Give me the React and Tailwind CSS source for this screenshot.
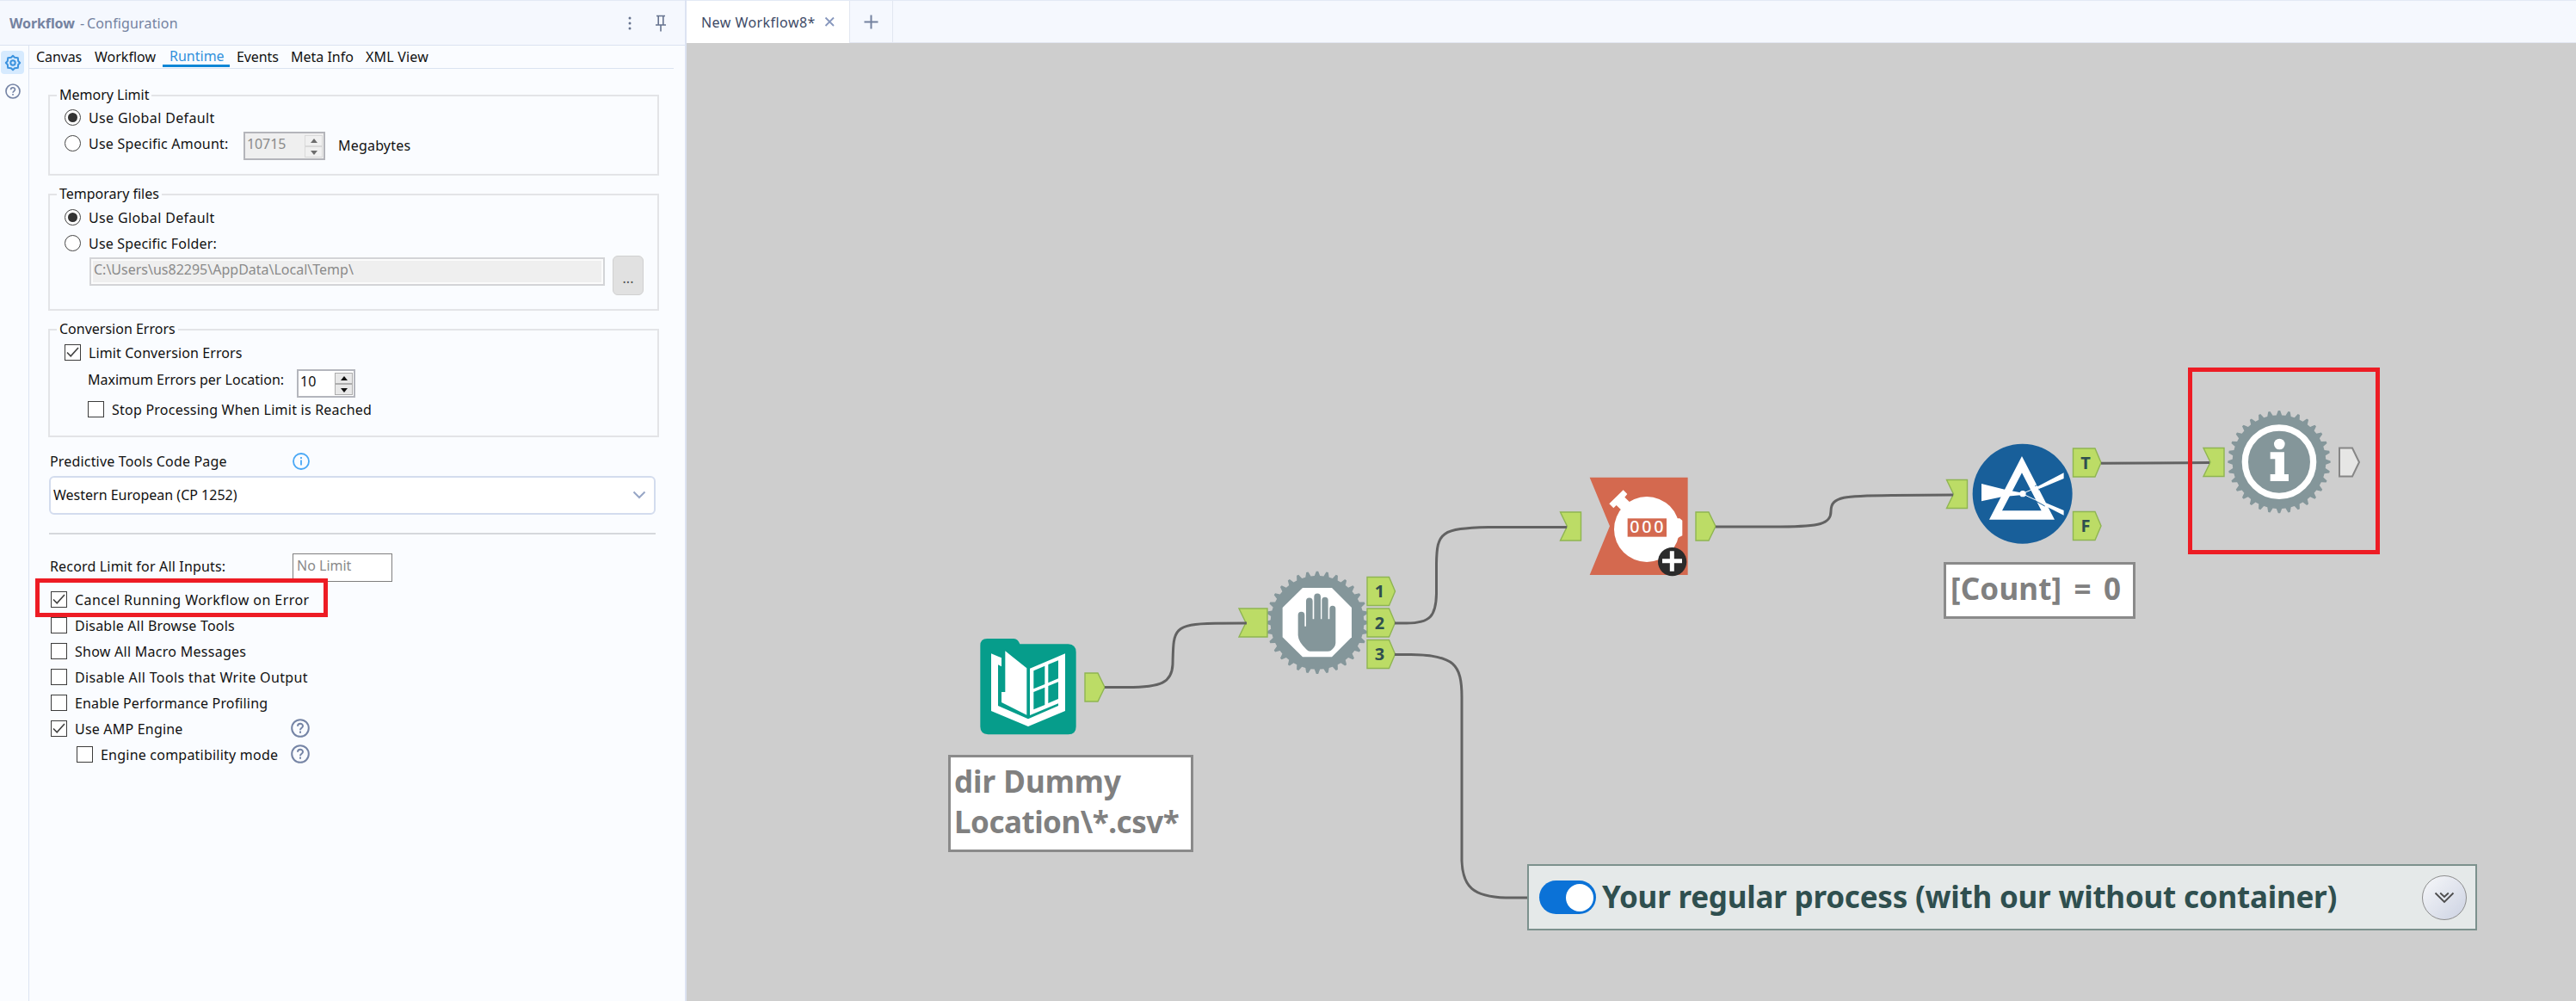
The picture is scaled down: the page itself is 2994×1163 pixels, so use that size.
import React from 'react'
import { clsx } from 'clsx'

const tabs = [
  { name: 'Canvas', cls: 'w-[68px] tracking-[-0.1px]' },
  { name: 'Workflow', cls: 'w-[87px]' },
  { name: 'Runtime', cls: 'w-[78px]' },
  { name: 'Events', cls: 'w-[63px] tracking-[-0.1px]' },
  { name: 'Meta Info', cls: 'w-[87px]' },
  { name: 'XML View', cls: 'w-[90px] tracking-[0.2px]' },
]

// 32 teeth, narrow tips
function gearPoints(cx, cy, outer, inner, teeth) {
  const pts = []
  for (let i = 0; i < teeth; i++) {
    const mid = (i / teeth) * Math.PI * 2 - Math.PI / 2
    const step = (Math.PI * 2) / teeth
    const ring = [[-0.3, inner], [-0.1, outer], [0.1, outer], [0.3, inner]]
    ring.forEach(([off, r]) => {
      const a = mid + off * step
      pts.push(`${(cx + r * Math.cos(a)).toFixed(2)},${(cy + r * Math.sin(a)).toFixed(2)}`)
    })
  }
  return pts.join(' ')
}

function SettingsIcon() {
  return (
    <svg width="20" height="20" viewBox="0 0 20 20" fill="none" stroke="#3b92de" strokeWidth="2" strokeLinejoin="round">
      <path d="M10 1.8 L12 3.8 L15.8 4.2 L16.2 8 L18.2 10 L16.2 12 L15.8 15.8 L12 16.2 L10 18.2 L8 16.2 L4.2 15.8 L3.8 12 L1.8 10 L3.8 8 L4.2 4.2 L8 3.8 Z" />
      <circle cx="10" cy="10" r="2.7" />
    </svg>
  )
}

function HelpIcon({ size = 22 }) {
  return (
    <svg width={size} height={size} viewBox="0 0 22 22" fill="none" stroke="#7584a5" strokeWidth="2" className="shrink-0">
      <circle cx="11" cy="11" r="9.8" />
      <path d="M8 8.8 C8 4.9 14 4.9 14 8.6 C14 10.8 11 10.8 11 13.2" />
      <path d="M11 14.6 V16.8" />
    </svg>
  )
}

function InfoIcon() {
  return (
    <svg width="20" height="20" viewBox="0 0 20 20" fill="none" stroke="#4aa8f5" strokeWidth="1.8" className="shrink-0">
      <circle cx="10" cy="10" r="9" />
      <path d="M10 8.5 V14.5 M10 5 V7" />
    </svg>
  )
}

function Radio({ checked, label, className, children }) {
  return (
    <div className="flex h-[30px] items-center gap-[9px] pl-[17px]">
      <span className="flex size-[19px] shrink-0 items-center justify-center rounded-full border-[1.5px] border-[#444] bg-white">
        {checked && <span className="size-[11px] rounded-full bg-[#333]" />}
      </span>
      <span className={clsx('shrink-0 pt-px', className)}>{label}</span>
      {children}
    </div>
  )
}

function Checkbox({ checked, label, className, children }) {
  return (
    <div className="flex h-[30px] items-center gap-[9px]">
      <span className="flex size-[19px] shrink-0 items-center justify-center border-[1.5px] border-[#3c3c3c] bg-white">
        {checked && (
          <svg width="17" height="17" viewBox="0 0 17 17" fill="none" stroke="#444" strokeWidth="1.7">
            <path d="M2 8.5 L6.2 12.8 L15 3" />
          </svg>
        )}
      </span>
      <span className={clsx('shrink-0 pt-px', className)}>{label}</span>
      {children}
    </div>
  )
}

function Spinner({ value, disabled, className }) {
  return (
    <div
      className={clsx(
        'flex h-[33px] shrink-0 items-center justify-between border-2 pr-[1px] pl-[2px]',
        disabled ? 'border-[#b4b5ba] bg-[#efefef] text-[#8a8a8a]' : 'border-[#b4b6bd] bg-white',
        className
      )}
    >
      <span className="self-start pt-[2px] leading-5">{value}</span>
      <span className="flex flex-col">
        {['M4 8 L8 3 L12 8 Z', 'M4 4 L8 9 L12 4 Z'].map(d => (
          <span key={d} className={clsx('flex h-[13px] w-[21px] items-center justify-center border', disabled ? 'border-[#d9d9d9] bg-[#f0f0f0]' : 'border-[#adadad] bg-[#e8e8e8]')}>
            <svg width="16" height="11" viewBox="0 0 16 11" fill={disabled ? '#6d6d6d' : '#111'}>
              <path d={d} />
            </svg>
          </span>
        ))}
      </span>
    </div>
  )
}

function Group({ title, className, children }) {
  return (
    <fieldset className={clsx('w-[710px] border-2 border-[#e3e4e7]', className)}>
      <legend className="ml-2 h-[22px] pr-[3px] pl-[3px] leading-5">{title}</legend>
      {children}
    </fieldset>
  )
}

function ConfigPanel() {
  return (
    <aside className="flex w-[796px] shrink-0 flex-col bg-[#fafcff]">
      <header className="flex h-[53px] items-center justify-between border-t border-b border-t-[#e3e9f5] border-b-[#dbe3f1] bg-[#f5f8fe] pr-[21px] pl-[11px] text-[#7482a0]">
        <div className="flex items-center">
          <b className="w-[82px] tracking-[-0.1px]">Workflow</b>
          <span className="w-[8px]">-</span>
          <span className="tracking-[0.15px]">Configuration</span>
        </div>
        <div className="flex items-center gap-[27px]">
          <svg width="4" height="16" viewBox="0 0 4 16" fill="#66738f">
            <circle cx="2" cy="2" r="1.5" />
            <circle cx="2" cy="8" r="1.5" />
            <circle cx="2" cy="14" r="1.5" />
          </svg>
          <svg width="14" height="20" viewBox="0 0 14 20" fill="none" stroke="#66738f" strokeWidth="1.6">
            <path d="M2 1.5 H12 M4.2 1.5 V11.5 M9.8 1.5 V11.5 M1 12 H13 M7 12 V19.5" />
          </svg>
        </div>
      </header>

      <div className="flex flex-1">
        <nav className="flex w-[34px] flex-col items-center gap-[9px] border-r border-[#dde4f1] pt-[6px] pr-[4px]">
          <span className="flex size-[27px] items-center justify-center rounded bg-[#d6eafe]">
            <SettingsIcon />
          </span>
          <span className="flex size-[22px] items-center justify-center">
            <HelpIcon size={18} />
          </span>
        </nav>

        <div className="flex flex-col">
          <div className="flex h-[27px] w-[749px] border-b border-[#dbe3f1]">
            {tabs.map(tab => (
              <button
                key={tab.name}
                className={clsx(
                  'h-[25px] pl-2 text-left leading-6',
                  tab.cls,
                  tab.name === 'Runtime' && 'border-b-[3px] border-[#0f86d6] text-[#3291dc]'
                )}
              >
                {tab.name}
              </button>
            ))}
          </div>

          <div className="flex flex-col pt-[20px] pl-[22px]">
            <Group title="Memory Limit" className="h-[104px]">
              <div className="-mt-px">
                <Radio checked label="Use Global Default" className="tracking-[0.37px]" />
                <Radio label="Use Specific Amount:" className="w-[171px] tracking-[0.22px]">
                  <div className="mt-[7px] flex items-center">
                    <Spinner value="10715" disabled className="w-[95px] tracking-[-0.1px]" />
                    <span className="ml-[15px] pb-[2px] tracking-[0.2px]">Megabytes</span>
                  </div>
                </Radio>
              </div>
            </Group>

            <Group title="Temporary files" className="mt-[11px] h-[146px]">
              <Radio checked label="Use Global Default" className="tracking-[0.37px]" />
              <Radio label="Use Specific Folder:" className="tracking-[0.18px]" />
              <div className="flex items-start pl-[46px]">
                <div className="mt-[2px] h-[33px] w-[599px] border-2 border-[#d3d4d7] bg-[#efefef] pt-[2px] pl-[3px] leading-5 text-[#8a8a8a] inset-ring-2 inset-ring-[#fbfbfb]">
                  C:\Users\us82295\AppData\Local\Temp\
                </div>
                <button className="ml-[9px] h-[46px] w-[36px] rounded-md border border-[#d0d0d0] bg-[#e1e1e1] pt-[6px] text-[#555]">...</button>
              </div>
            </Group>

            <Group title="Conversion Errors" className="mt-[11px] h-[136px]">
              <div className="pl-[17px]">
                <Checkbox checked label="Limit Conversion Errors" className="tracking-[0.1px]" />
                <div className="flex h-[36px] items-start pl-[27px]">
                  <span className="mt-[7px] w-[243px] leading-5">Maximum Errors per Location:</span>
                  <Spinner value="10" className="mt-[5px] w-[68px]" />
                </div>
                <div className="pl-[27px]">
                  <Checkbox label="Stop Processing When Limit is Reached" className="tracking-[0.23px]" />
                </div>
              </div>
            </Group>

            <div className="ml-px flex w-[705px] flex-col">
              <div className="mt-[13px] flex h-[30px] items-center">
                <span className="w-[283px] pl-px tracking-[0.17px]">Predictive Tools Code Page</span>
                <InfoIcon />
              </div>
              <div className="mt-[2px] flex h-[45px] items-center justify-between rounded-md border-2 border-[#d3dcee] bg-white pr-[9px] pb-px pl-[3px]">
                <span>Western European (CP 1252)</span>
                <svg width="16" height="10" viewBox="0 0 16 10" fill="none" stroke="#97a6c6" strokeWidth="2">
                  <path d="M1.5 1.5 L8 8 L14.5 1.5" />
                </svg>
              </div>
              <div className="mt-[21px] h-[2px] bg-[#d5d8dc]" />

              <div className="mt-[22px] flex h-[33px] items-center">
                <span className="w-[283px] pb-[3px] pl-px tracking-[0.17px]">Record Limit for All Inputs:</span>
                <div className="h-[33px] w-[116px] border-[1.5px] border-[#7f7f7f] bg-white pt-[3px] pl-[4px] leading-5 text-[#8a8a8a]">No Limit</div>
              </div>

              <div className="mt-[5px] pl-[2px]">
                <div className="relative">
                  <Checkbox checked label="Cancel Running Workflow on Error" className="tracking-[0.44px]" />
                  <div className="absolute -top-[9px] -left-[18px] h-[45px] w-[340px] border-[5px] border-[#ed1c24]" />
                </div>
                <Checkbox label="Disable All Browse Tools" className="tracking-[0.22px]" />
                <Checkbox label="Show All Macro Messages" className="tracking-[0.27px]" />
                <Checkbox label="Disable All Tools that Write Output" className="tracking-[0.37px]" />
                <Checkbox label="Enable Performance Profiling" className="tracking-[0.15px]" />
                <Checkbox checked label="Use AMP Engine" className="w-[242px] tracking-[0.2px]">
                  <HelpIcon />
                </Checkbox>
                <div className="pl-[30px]">
                  <Checkbox label="Engine compatibility mode" className="w-[212px] tracking-[0.22px]">
                    <HelpIcon />
                  </Checkbox>
                </div>
              </div>
            </div>
          </div>
        </div>
      </div>
    </aside>
  )
}

function InAnchor({ x, y, w = 24 }) {
  return <path d={`M${x} ${y} H${x + w} V${y + 33} H${x} L${x + 8} ${y + 16.5} Z`} fill="#bcdc66" stroke="#8fb552" strokeWidth="1.4" />
}

function OutAnchor({ x, y, w = 23, label, empty }) {
  const shoulder = x + w - (w > 30 ? 7 : 8)
  return (
    <g>
      <path
        d={`M${x} ${y} H${shoulder} L${x + w} ${y + 16.5} L${shoulder} ${y + 33} H${x} Z`}
        fill={empty ? '#e6e6e5' : '#bcdc66'}
        stroke={empty ? '#868686' : '#8fb552'}
        strokeWidth={empty ? 2 : 1.4}
      />
      {label && (
        <text x={x + 14.5} y={y + 23.5} textAnchor="middle" fontSize="20" fontWeight="700" fill="#2f4f4f">
          {label}
        </text>
      )}
    </g>
  )
}

function DirectoryTool() {
  return (
    <g transform="translate(1130 730) scale(0.3333)">
      <path d="M28 60 Q28 36 52 36 H145 Q160 37 166 55 H335 Q362 57 362 83 V343 Q362 370 335 370 H55 Q28 368 28 343 Z" fill="#069d8b" />
      <g fill="#fff">
        <path d="M66 88 L102 103 V133 L90 127 V270 L195 316 L300 270 V262 L201 303 V140 L324 88 V288 L195 342 L66 288 Z" />
        <path d="M115 79 L190 139 V302 L102 258 V222 H115 Z" />
      </g>
      <g fill="#069d8b">
        <path d="M214 148 L253 131 V195 L214 211 Z" />
        <path d="M265 126 L300 112 V175 L265 190 Z" />
        <path d="M214 222 L253 206 V267 L214 283 Z" />
        <path d="M265 201 L300 187 V246 L265 261 Z" />
      </g>
    </g>
  )
}

function BlockTool() {
  return (
    <g transform="translate(1430 650) scale(0.3333)">
      <polygon points={gearPoints(303, 220, 179, 163, 32)} fill="#84969a" />
      <path d="M252 99 H354 L423 168 V271 L354 340 H252 L182 271 V168 Z" fill="#fff" />
      <path
        d="M236 194 a11 11 0 0 1 23 0 V233 H264 V145 a11.5 11.5 0 0 1 23 0 V208 H292 V130 a11.5 11.5 0 0 1 23 0 V208 H319 V142 a11 11 0 0 1 22 0 V208 H346 V172 a10.5 10.5 0 0 1 21 0 V292 Q366 306 350 318 Q346 320 340 320 H278 Q271 320 266 314 Q237 288 236 264 Z"
        fill="#84969a"
      />
    </g>
  )
}

function CountTool() {
  return (
    <g transform="translate(1800 520) scale(0.3333)">
      <path d="M143 104 H485 V444 H143 L213 274 Z" fill="#d4694f" />
      <g fill="#fff">
        <circle cx="342" cy="285" r="114" />
        <path d="M436 242 L447 247 H457 L466 254 V307 L457 311 L446 318 L436 325 Z" />
        <path d="M211 196 L260 148 L274 162 L265 173 L290 197 L260 224 L236 201 L226 211 Z" />
      </g>
      <rect x="275" y="247" width="136" height="64" fill="#d4694f" />
      <text x="300 342 384" y="298" textAnchor="middle" fontSize="59" fontWeight="500" fill="#fff">000</text>
      <circle cx="431" cy="398" r="50" fill="#2b2b2b" />
      <path d="M396 395 H465 M430 361 V431" stroke="#fff" strokeWidth="15" />
    </g>
  )
}

function FilterTool() {
  return (
    <g transform="translate(2220 480) scale(0.3333)">
      <circle cx="392" cy="281" r="174" fill="#185f9a" />
      <g fill="#fff">
        <path d="M390 150 L504 371 H276 Z M390 208 L321 340 H458 Z" fillRule="evenodd" />
        <path d="M249 246 L333 267 L385 277 V286 L320 292 L249 307 Z" />
        <circle cx="393" cy="281" r="11" />
        <path d="M440 258 L536 208 V228 L450 264 Z" />
        <path d="M472 312 L536 339 V356 L480 328 Z" />
      </g>
      <path d="M400 277 L442 259 M400 285 L470 318" stroke="#fff" strokeWidth="3" />
      <path d="M436 254 L448 248 M448 267 L462 262 M436 305 L470 324" stroke="#185f9a" strokeWidth="3" />
    </g>
  )
}

function MessageTool() {
  return (
    <g transform="translate(2520 410) scale(0.3333)">
      <polygon points={gearPoints(387, 380, 179, 163, 32)} fill="#84969a" />
      <circle cx="387" cy="380" r="119" fill="none" stroke="#fff" strokeWidth="22" />
      <circle cx="388" cy="318" r="19" fill="#fff" />
      <path d="M356 346 H405 V423 H420 V447 H356 V423 H373 V370 H356 Z" fill="#fff" />
    </g>
  )
}

function WorkflowCanvas() {
  return (
    <div className="relative flex-1 overflow-hidden bg-[#cecece]">
      <svg className="absolute inset-0" width="2196" height="1113" viewBox="798 50 2196 1113">
        <BlockTool />
        <DirectoryTool />
        <OutAnchor x={1261} y={782} />
        <InAnchor x={1440} y={707} w={33} />
        <OutAnchor x={1589} y={670.5} w={32.5} label="1" />
        <OutAnchor x={1589} y={707} w={32.5} label="2" />
        <OutAnchor x={1589} y={743.5} w={32.5} label="3" />
        <InAnchor x={1813.5} y={595} />
        <CountTool />
        <OutAnchor x={1971} y={595} />
        <InAnchor x={2262.5} y={557.5} />
        <FilterTool />
        <OutAnchor x={2409.5} y={521} w={32.5} label="T" />
        <OutAnchor x={2409.5} y={594.5} w={32.5} label="F" />
        <InAnchor x={2561} y={520.5} />
        <MessageTool />
        <OutAnchor x={2719} y={520.5} empty />

        <g fill="none" stroke="#626262" strokeWidth="3">
          <path d="M1284 798.5 H1310 C1350 798.5 1362 793 1363 772 C1364 732 1362 725 1412 724.3 L1449 724" />
          <path d="M1621 724 H1635 C1662 724 1669 716 1669.5 690 V655 C1670 618 1675 614 1730 612.5 H1821" />
          <path d="M1621 760.5 H1640 C1690 761 1699 772 1699 810 V1000 C1700 1030 1712 1042 1750 1043 H1775" />
          <path d="M1994 612 H2070 C2115 611.5 2128 609 2128 594 C2128 576 2145 576 2200 575.5 L2270 575" />
          <path d="M2442 538.3 L2495 538 L2568 537.5" />
        </g>
      </svg>

      <div className="absolute top-[827px] left-[304px] h-[113px] w-[285px] border-[3px] border-[#8a8a8a] bg-white pt-[5px] pl-[4px] text-[35px] leading-[46.5px] font-bold text-[#808080]">
        <div>dir Dummy</div>
        <div className="tracking-[-0.5px]">Location\*.csv*</div>
      </div>

      <div className="absolute top-[603px] left-[1461px] flex h-[66px] w-[223px] items-center border-[3px] border-[#8a8a8a] bg-white pb-[4px] pl-[5px] text-[35px] font-bold tracking-[0.15px] whitespace-nowrap text-[#808080] [word-spacing:5px]">
        [Count] = 0
      </div>

      <div className="absolute top-[377px] left-[1745px] h-[217px] w-[223px] border-[5px] border-[#ed1c24]" />

      <div className="absolute top-[954px] left-[977px] flex h-[77px] w-[1104px] items-center border-2 border-[#7c918d] bg-[#e5e9e9] pr-[10px] pl-[12px]">
        <span className="flex h-[39px] w-[66px] items-center justify-end rounded-full bg-[#0b72d7] pr-[3px]">
          <span className="size-[32px] rounded-full bg-white" />
        </span>
        <span className="ml-[7px] flex-1 pb-[2px] text-[35px] leading-[48px] font-bold tracking-[-0.22px] whitespace-nowrap text-[#2f4f4f]">
          Your regular process (with our without container)
        </span>
        <button className="flex size-[52px] items-center justify-center rounded-full border-[1.5px] border-[#8d8d8d] bg-linear-to-br from-[#f7f8fa] to-[#ccd2e2]">
          <svg width="24" height="14" viewBox="0 0 24 14" fill="none" stroke="#4d4d4d" strokeWidth="1.8">
            <path d="M1.5 1.5 L12 12 L22.5 1.5 M7.2 1.5 L12 6 L16.8 1.5" />
          </svg>
        </button>
      </div>
    </div>
  )
}

export default function App() {
  return (
    <div className="flex h-[1163px] w-[2994px] overflow-hidden font-['Noto_Sans','Open_Sans',sans-serif] text-base text-[#111]">
      <ConfigPanel />
      <div className="w-[2px] shrink-0 bg-[#dce3f2]" />
      <main className="flex min-w-0 flex-1 flex-col">
        <div className="flex h-[50px] border-t border-[#e3e9f5] bg-[#f5f8fe]">
          <div className="flex w-[189px] items-center bg-white pl-[17px] text-[#3d4a66]">
            <span className="w-[143px] tracking-[0.45px]">New Workflow8*</span>
            <svg width="13" height="13" viewBox="0 0 13 13" stroke="#8797bd" strokeWidth="1.8">
              <path d="M1.5 1.5 L11 11 M11 1.5 L1.5 11" />
            </svg>
          </div>
          <div className="flex w-[51px] items-center justify-center border-r border-b border-l border-[#e2e7f1]">
            <svg width="17" height="17" viewBox="0 0 17 17" stroke="#74829f" strokeWidth="2">
              <path d="M8.5 0.5 V16.5 M0.5 8.5 H16.5" />
            </svg>
          </div>
          <div className="flex-1 border-b border-[#e2e7f1]" />
        </div>
        <WorkflowCanvas />
      </main>
    </div>
  )
}
